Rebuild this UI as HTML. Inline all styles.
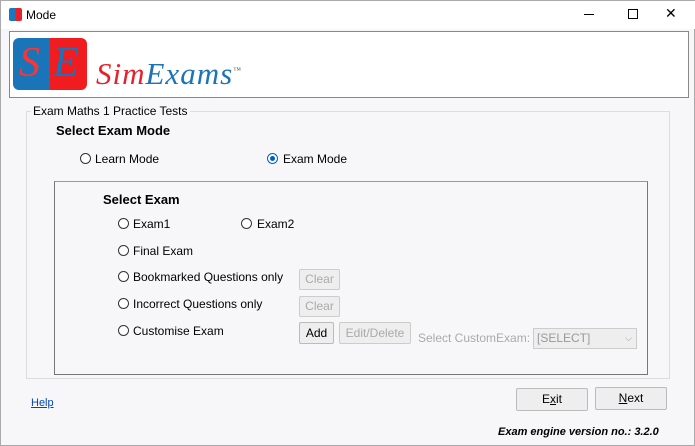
<!DOCTYPE html>
<html><head><style>
*{margin:0;padding:0;box-sizing:border-box}
body{width:695px;height:446px;background:#f7f7fa;font-family:"Liberation Sans",sans-serif;font-size:12px;color:#000;position:relative;overflow:hidden;border:1px solid #aaa}
.a{position:absolute;white-space:nowrap}
.rb{position:absolute;width:11px;height:11px;border:1px solid #333;border-radius:50%;background:#fff}
.rb.on{border-color:#0060c0}
.rb.on::after{content:"";position:absolute;left:2px;top:2px;width:5px;height:5px;border-radius:50%;background:#0060c0}
.btn{position:absolute;border:1px solid #ccc;background:#eee;border-radius:2px;text-align:center;color:#aaa;font-size:12px}
</style></head><body>
<div class="a" style="left:0;top:0;width:695px;height:28px;background:#fff"></div>
<div class="a" style="left:8px;top:7px;width:13px;height:13px;background:linear-gradient(90deg,#1b77c0 50%,#e8202a 50%);border-radius:2px"></div>
<div class="a" style="left:25px;top:7px;font-size:12px">Mode</div>
<div class="a" style="left:583px;top:13px;width:10px;height:1px;background:#000"></div>
<div class="a" style="left:627px;top:8px;width:10px;height:10px;border:1px solid #000"></div>
<div class="a" style="left:664px;top:4px;font-size:14px;font-weight:100">✕</div>
<div class="a" style="left:8px;top:30px;width:680px;height:67px;background:#fff;border:1px solid #888"></div>
<div class="a" style="left:12px;top:37px;width:74px;height:52px;border-radius:6px;background:linear-gradient(90deg,#1a74b8 50%,#f01c20 50%)"></div>
<div class="a" style="left:18px;top:38px;font-family:'Liberation Serif',serif;font-size:42px;color:#f33;font-style:italic">S</div>
<div class="a" style="left:52px;top:38px;font-family:'Liberation Serif',serif;font-size:42px;color:#1a74b8;font-style:italic">E</div>
<div class="a" style="left:95px;top:55px;font-family:'Liberation Serif',serif;font-style:italic;font-size:31px;color:#e8202a;letter-spacing:1px">Sim<span style="color:#1a74b8">Exams</span><sup style="font-size:8px;color:#555">™</sup></div>
<div class="a" style="left:25px;top:110px;width:644px;height:268px;border:1px solid #ddd"></div>
<div class="a" style="left:30px;top:103px;background:#f7f7fa;padding:0 2px;font-size:12px">Exam Maths 1 Practice Tests</div>
<div class="a" style="left:55px;top:122px;font-weight:bold;font-size:13px">Select Exam Mode</div>
<div class="rb" style="left:79px;top:152px"></div><div class="a" style="left:94px;top:151px">Learn Mode</div>
<div class="rb on" style="left:266px;top:152px"></div><div class="a" style="left:282px;top:151px">Exam Mode</div>
<div class="a" style="left:53px;top:180px;width:594px;height:194px;border:1px solid #777;border-top-color:#999"></div>
<div class="a" style="left:102px;top:191px;font-weight:bold;font-size:13px">Select Exam</div>
<div class="rb" style="left:117px;top:217px"></div><div class="a" style="left:132px;top:216px">Exam1</div>
<div class="rb" style="left:240px;top:217px"></div><div class="a" style="left:256px;top:216px">Exam2</div>
<div class="rb" style="left:117px;top:244px"></div><div class="a" style="left:132px;top:243px">Final Exam</div>
<div class="rb" style="left:117px;top:270px"></div><div class="a" style="left:132px;top:269px">Bookmarked Questions only</div>
<div class="rb" style="left:117px;top:297px"></div><div class="a" style="left:132px;top:296px">Incorrect Questions only</div>
<div class="rb" style="left:117px;top:324px"></div><div class="a" style="left:132px;top:323px">Customise Exam</div>
<div class="btn" style="left:298px;top:268px;width:41px;height:21px;line-height:19px">Clear</div>
<div class="btn" style="left:298px;top:295px;width:41px;height:21px;line-height:19px">Clear</div>
<div class="btn" style="left:298px;top:321px;width:35px;height:22px;line-height:20px;color:#000;border-color:#bbb">Add</div>
<div class="btn" style="left:338px;top:321px;width:72px;height:22px;line-height:20px">Edit/Delete</div>
<div class="a" style="left:417px;top:330px;color:#aaa">Select CustomExam:</div>
<div class="a" style="left:532px;top:327px;width:104px;height:21px;border:1px solid #ccc;background:#eee;color:#999;padding-left:3px;line-height:19px;font-size:12px">[SELECT]<span style="position:absolute;right:4px;top:0;font-size:9px">⌵</span></div>
<div class="a" style="left:30px;top:396px;color:#0645ad;text-decoration:underline;font-size:11px">Help</div>
<div class="btn" style="left:515px;top:387px;width:72px;height:23px;line-height:21px;color:#000;border-color:#bbb">E<u>x</u>it</div>
<div class="btn" style="left:594px;top:386px;width:72px;height:23px;line-height:21px;color:#000;border-color:#bbb"><u>N</u>ext</div>
<div class="a" style="left:497px;top:425px;font-weight:bold;font-style:italic;font-size:11px">Exam engine version no.: 3.2.0</div>
</body></html>
